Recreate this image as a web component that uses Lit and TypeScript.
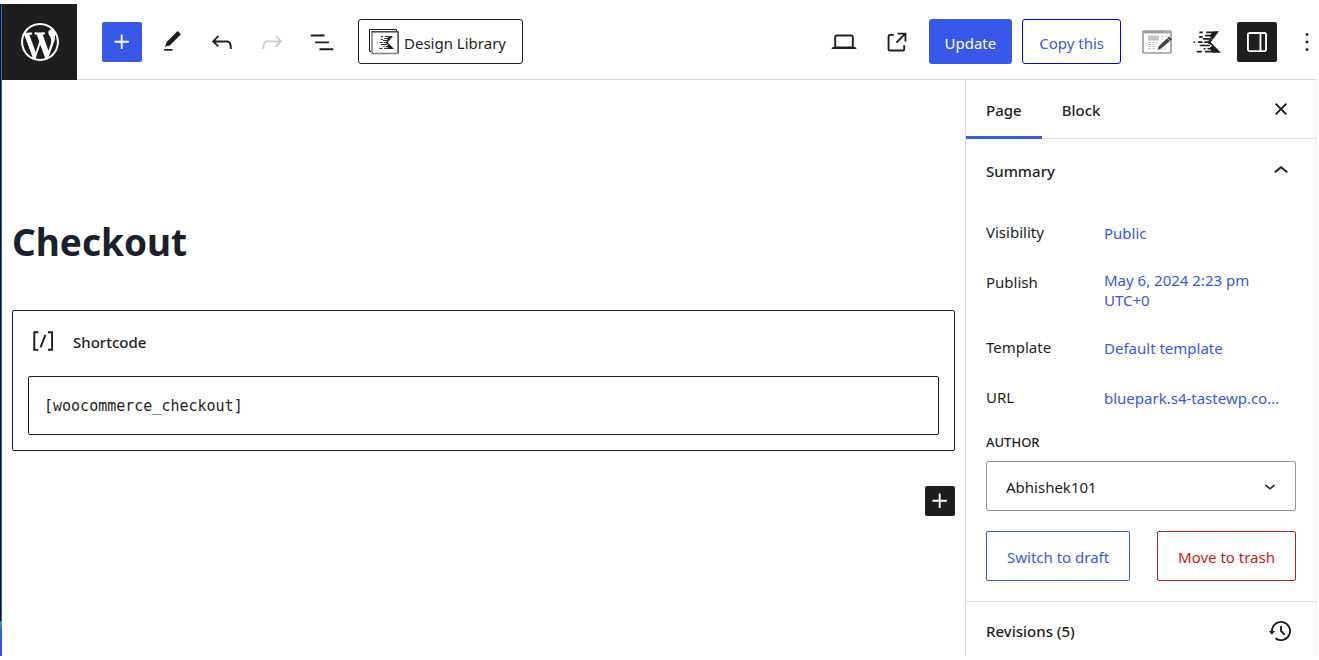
import { LitElement, html, css, svg } from "lit";
import { customElement, state } from "lit/decorators.js";

const PATHS = {
  plus: "M11 12.5V17.5H12.5V12.5H17.5V11H12.5V6H11V11H6V12.5H11Z",
  edit: "M20.1 5.1L16.9 2 6.2 12.7l-1.3 4.4 4.5-1.3L20.1 5.1zM4 20.8h8v-1.5H4v1.5z",
  undo: "M18.3 11.7c-.6-.6-1.4-.9-2.3-.9H6.7l2.9-3.3-1.1-1-4.5 5L8.5 16l1-1-2.7-2.7H16c.5 0 .9.2 1.3.5 1 1 1 3.4 1 4.5v.3h1.5v-.2c0-1.5 0-4.3-1.5-5.7z",
  redo: "M15.6 6.5l-1.1 1 2.9 3.3H8c-.9 0-1.7.3-2.3.9-1.4 1.5-1.4 4.2-1.4 5.6v.2h1.5v-.3c0-1.1 0-3.5 1-4.5.3-.3.7-.5 1.3-.5h9.2L14.5 15l1.1 1.1 4.6-4.6-4.6-5z",
  list: "M3 6h11v1.5H3V6Zm3.5 5.5h11V13h-11v-1.5ZM21 17H10v1.5h11V17Z",
  laptop: "M20.5 16h-.7V8c0-1.1-.9-2-2-2H6.2c-1.1 0-2 .9-2 2v8h-.7c-.8 0-1.5.7-1.5 1.5h20c0-.8-.7-1.5-1.5-1.5zM5.7 8c0-.3.2-.5.5-.5h11.6c.3 0 .5.2.5.5v7.6H5.7V8z",
  external: "M19.5 4.5h-7V6h4.44l-5.97 5.97 1.06 1.06L18 7.06v4.44h1.5v-7Zm-13 1a2 2 0 0 0-2 2v10a2 2 0 0 0 2 2h10a2 2 0 0 0 2-2v-3H17v3a.5.5 0 0 1-.5.5h-10a.5.5 0 0 1-.5-.5v-10a.5.5 0 0 1 .5-.5h3V5.5h-3Z",
  drawer: "M18 4H6c-1.1 0-2 .9-2 2v12c0 1.1.9 2 2 2h12c1.1 0 2-.9 2-2V6c0-1.1-.9-2-2-2zm-4 14.5H6c-.3 0-.5-.2-.5-.5V6c0-.3.2-.5.5-.5h8v13zm4.5-.5c0 .3-.2.5-.5.5h-2.5v-13H18c.3 0 .5.2.5.5v12z",
  more: "M13 19h-2v-2h2v2zm0-6h-2v-2h2v2zm0-6h-2V5h2v2z",
  close: "M12 13.06l3.712 3.713 1.061-1.06L13.061 12l3.712-3.712-1.06-1.06L12 10.938 8.288 7.227l-1.061 1.06L10.939 12l-3.712 3.712 1.06 1.061L12 13.061z",
  up: "M6.5 12.4L12 8l5.5 4.4-.9 1.2L12 10l-4.5 3.6-1-1.2z",
  down: "M17.5 11.6L12 16l-5.5-4.4.9-1.2L12 14l4.5-3.6 1 1.2z",
  shortcode: "M16 4.2v1.5h2.5v12.5H16v1.5h4V4.2h-4zM4.2 19.8h4v-1.5H5.8V5.8h2.5V4.2h-4l-.1 15.6zm5.1-3.1l1.4.6 4-10-1.4-.6-4 10z",
  history: "M5.5 12h1.75l-2.5 3-2.5-3H4a8 8 0 113.134 6.35l.907-1.194A6.5 6.5 0 105.5 12zm9.53 1.97l-2.28-2.28V8.5a.75.75 0 00-1.5 0V12a.747.747 0 00.218.529l1.282-.84-1.28.842 2.5 2.5a.75.75 0 101.06-1.061z",
};

const icon = (name: keyof typeof PATHS, size = 30) => html`
  <svg width=${size} height=${size} viewBox="0 0 24 24" fill="currentColor" aria-hidden="true">
    <path d=${PATHS[name]}></path>
  </svg>`;

const wordpressLogo = html`
  <svg width="38" height="38" viewBox="0 0 20 20" fill="currentColor" aria-hidden="true">
    <path d="M20 10c0-5.51-4.49-10-10-10C4.48 0 0 4.49 0 10c0 5.52 4.48 10 10 10 5.51 0 10-4.48 10-10zM7.78 15.37L4.37 6.22c.55-.02 1.17-.08 1.17-.08.5-.06.44-1.13-.06-1.11 0 0-1.45.11-2.37.11-.18 0-.37 0-.58-.01C4.12 2.69 6.87 1.11 10 1.11c2.33 0 4.45.87 6.05 2.34-.68-.11-1.65.39-1.65 1.58 0 .74.45 1.36.9 2.1.35.61.55 1.36.55 2.46 0 1.49-1.4 5-1.4 5l-3.03-8.37c.54-.02.82-.17.82-.17.5-.05.44-1.25-.06-1.22 0 0-1.44.12-2.38.12-.87 0-2.33-.12-2.33-.12-.5-.03-.56 1.2-.06 1.22l.92.08 1.26 3.41zM17.41 10c.24-.64.74-1.87.43-4.25.7 1.29 1.05 2.71 1.05 4.25 0 3.29-1.73 6.24-4.4 7.78.97-2.59 1.94-5.2 2.92-7.78zM6.1 18.09C3.12 16.65 1.11 13.53 1.11 10c0-1.3.23-2.48.72-3.59C3.25 10.3 4.67 14.2 6.1 18.09zm4.03-6.63l2.58 6.98c-.86.29-1.76.45-2.71.45-.79 0-1.57-.11-2.29-.33.81-2.38 1.62-4.74 2.42-7.1z"></path>
  </svg>`;

/* Winged K mark with speed lines, drawn on an 85 x 67 grid. */
const kadenceShape = svg`
  <path d="M62 1H79L54 34L85 66H62L52 56V50L58 44L46 38V30L58 24L52 18V12Z" fill="currentColor"></path>
  <g stroke="currentColor" stroke-width="5" stroke-linecap="round">
    <path d="M21 4H28M42 4H60M38 14H54M20 18H28M32 24H54M3 34H3.1M17 34H27M36 34H50M22 44H50M34 54H36M46 54H56M13 63H25M38 63H64"></path>
  </g>`;

const kadenceIcon = html`
  <svg width="28" height="22" viewBox="0 0 85 67" aria-hidden="true">${kadenceShape}</svg>`;

const libraryIcon = html`
  <svg width="30" height="26" viewBox="0 0 30 26" fill="none" aria-hidden="true">
    <path d="M2 22.5H.5V.5H27.5V2" stroke="#1e1e1e"></path>
    <rect x="3" y="3" width="26" height="21.5" fill="#fff" stroke="#888" stroke-width="1.6"></rect>
    <path d="M2.5 2.6H29.2V24" stroke="#444"></path>
    <svg x="8" y="6.5" width="17" height="14" viewBox="0 0 85 67">${kadenceShape}</svg>
  </svg>`;

const pageEditIcon = html`
  <svg width="30" height="24" viewBox="0 0 30 24" fill="none" aria-hidden="true">
    <rect x="1" y="1" width="28" height="22" rx="1" fill="#fff" stroke="#999" stroke-width="1.6"></rect>
    <path d="M1 2.2H29" stroke="#999" stroke-width="2.4"></path>
    <path d="M22 2H24M25.5 2H27.5" stroke="#ddd"></path>
    <rect x="6" y="5.5" width="11" height="5" fill="#c4c4c4"></rect>
    <path d="M19 6.5H25M19 9H23M6 12.5H16M6 14.5H15M6 16.5H14M6 18.5H13" stroke="#ccc" stroke-dasharray="3 1"></path>
    <path d="M18 17.5H25V20H14Z" fill="#ececec"></path>
    <path d="M27 6.5L30 9.5 19 18.5 15.5 20 16.8 16.2Z" fill="#444"></path>
    <path d="M25 8.2L28 11.2" stroke="#ccc" stroke-width=".8"></path>
  </svg>`;

@customElement("app-root")
export class AppRoot extends LitElement {
  @state() private tab = "Page";
  @state() private open = true;

  private details = [
    { label: "Visibility", value: "Public" },
    { label: "Publish", value: "May 6, 2024 2:23 pm UTC+0" },
    { label: "Template", value: "Default template" },
    { label: "URL", value: "bluepark.s4-tastewp.co…" },
  ];

  static styles = css`
    :host {
      display: block;
      box-sizing: border-box;
      min-height: 100vh;
      padding: 4px 2px 4px 0;
      background: #fff;
      color: #1e1e1e;
      font: 400 15px/20px "Noto Sans", "Open Sans", sans-serif;
      --accent: #3858e9;
      --line: #ddd;
    }
    *, *::before, *::after { box-sizing: border-box; }
    svg { display: block; flex: none; }
    button, select, textarea { font: inherit; color: inherit; margin: 0; }
    button { background: none; border: 0; padding: 0; cursor: pointer; white-space: nowrap; }
    h1, dl, dd { margin: 0; }
    .frame {
      display: grid;
      grid-template-columns: 2px minmax(0, 1fr);
      min-height: calc(100vh - 8px);
    }
    .edge {
      background:
        linear-gradient(90deg, transparent 50%, #0a78d0 50%) 0 0 / 100% 617px no-repeat,
        linear-gradient(#07070f 617px, #5a86b4 617px 621px, #1f6fc4 625px, #3b4df0 640px);
    }
    .app { display: grid; grid-template-rows: 76px 1fr; }
    .bar {
      display: flex;
      align-items: center;
      border-bottom: 1px solid var(--line);
      overflow-x: clip;
    }
    .logo {
      display: grid;
      place-items: center;
      width: 75px;
      height: 76px;
      margin-bottom: -1px;
      background: #1e1e1e;
      color: #fff;
      flex: none;
    }
    .tools { display: flex; align-items: center; gap: 10px; padding-left: 25px; flex: 1; }
    .actions { display: flex; align-items: center; gap: 10px; margin-right: -10px; }
    .tool {
      display: grid;
      place-items: center;
      width: 40px;
      height: 40px;
      border-radius: 2px;
      flex: none;
    }
    .primary { background: var(--accent); color: #fff; }
    .dark { background: #1e1e1e; color: #fff; }
    .tool:disabled { color: #ccc; cursor: default; }
    .btn {
      display: flex;
      align-items: center;
      justify-content: center;
      height: 45px;
      padding: 2px 15px 0;
      border: 1px solid transparent;
      border-radius: 3px;
    }
    .library { gap: 5px; margin-left: 6px; padding: 0 16px 0 10px; border-color: #1e1e1e; }
    .library span { padding-top: 2px; }
    .view { margin: 0 2px 0 3px; }
    .update { background: var(--accent); color: #fff; }
    .copy { border-color: #0000f0; color: var(--accent); margin-right: 6px; padding: 2px 16px 0; }
    .body { display: grid; grid-template-columns: minmax(0, 1fr) 352px; }
    .canvas { padding: 130px 10px 20px; }
    h1 { font-size: 37px; line-height: 64px; font-weight: 700; color: #1a202c; }
    .block {
      margin-top: 36px;
      padding: 15px;
      border: 1px solid #1e1e1e;
      border-radius: 2px;
    }
    .block-label {
      display: flex;
      align-items: center;
      gap: 15px;
      height: 30px;
      margin-bottom: 20px;
      font-weight: 500;
    }
    .block-label span { padding-top: 2px; }
    .code {
      display: block;
      width: 100%;
      height: 59px;
      padding: 19px 15px;
      border: 1px solid #1e1e1e;
      border-radius: 2px;
      background: #fff;
      resize: none;
      overflow: hidden;
      font-family: "DejaVu Sans Mono", monospace;
    }
    .append { display: flex; justify-content: flex-end; padding-top: 35px; }
    .append button { width: 30px; height: 30px; border-radius: 2px; }
    .side { border-left: 1px solid var(--line); border-right: 1px solid #eee; }
    .tabs { display: flex; height: 59px; border-bottom: 1px solid var(--line); }
    .tab { padding: 1px 20px 0; font-weight: 500; height: 59px; }
    .tab[aria-selected="true"] { border-bottom: 3px solid var(--accent); padding-top: 4px; }
    .close { margin: 9px 15px 0 auto; }
    .panel-head {
      display: flex;
      align-items: center;
      justify-content: space-between;
      width: 100%;
      height: 62px;
      padding: 1px 20px 0;
      font-weight: 500;
      text-align: left;
    }
    .details { display: grid; gap: 10px; padding: 12px 15px 0 20px; }
    .row { display: grid; grid-template-columns: 118px minmax(0, 1fr); }
    dt { padding-top: 9px; }
    dd { padding: 7px 20px 8px 0; display: grid; min-height: 40px; align-items: center; }
    dd button { color: var(--accent); text-align: left; white-space: normal; }
    .single { white-space: nowrap; }
    .fields { display: grid; gap: 9px; padding: 14px 20px 20px; }
    .fields label { font-size: 13px; font-weight: 500; text-transform: uppercase; }
    .select { display: grid; grid-template-columns: minmax(0, 1fr) 40px; align-items: center; }
    .select select {
      grid-area: 1 / 1 / 2 / 3;
      appearance: none;
      height: 50px;
      padding: 2px 19px 0;
      border: 1px solid #949494;
      border-radius: 2px;
      background: #fff;
    }
    .select svg { grid-area: 1 / 2; pointer-events: none; justify-self: start; margin-left: 3px; }
    .pair { display: flex; justify-content: space-between; padding-top: 11px; }
    .pair button {
      height: 50px;
      padding: 1px 20px 0;
      border: 1px solid currentColor;
      border-radius: 2px;
    }
    .draft { color: var(--accent); }
    .trash { color: #cc1818; }
    .revisions { border-top: 1px solid var(--line); height: 55px; padding-top: 4px; }
  `;

  render() {
    return html`
      <div class="frame">
        <div class="edge"></div>
        <div class="app">
          <header class="bar">
            <a class="logo" href="#" aria-label="View pages">${wordpressLogo}</a>
            <div class="tools">
              <button class="tool primary" aria-label="Add block">${icon("plus")}</button>
              <button class="tool" aria-label="Tools">${icon("edit", 25)}</button>
              <button class="tool" aria-label="Undo">${icon("undo")}</button>
              <button class="tool" aria-label="Redo" disabled>${icon("redo")}</button>
              <button class="tool" aria-label="Document overview">${icon("list")}</button>
              <button class="btn library">${libraryIcon}<span>Design Library</span></button>
            </div>
            <div class="actions">
              <button class="tool" aria-label="Preview">${icon("laptop")}</button>
              <button class="tool view" aria-label="View page">${icon("external")}</button>
              <button class="btn update">Update</button>
              <button class="btn copy">Copy this</button>
              <button class="tool" aria-label="Page notes">${pageEditIcon}</button>
              <button class="tool" aria-label="Kadence blocks">${kadenceIcon}</button>
              <button class="tool dark" aria-label="Settings">${icon("drawer")}</button>
              <button class="tool" aria-label="Options">${icon("more")}</button>
            </div>
          </header>
          <div class="body">
            <main class="canvas">
              <h1>Checkout</h1>
              <section class="block">
                <label class="block-label" for="code">${icon("shortcode")}<span>Shortcode</span></label>
                <textarea class="code" id="code" rows="1" .value=${"[woocommerce_checkout]"}></textarea>
              </section>
              <div class="append">
                <button class="tool dark" aria-label="Add block">${icon("plus")}</button>
              </div>
            </main>
            <aside class="side">
              <div class="tabs" role="tablist">
                ${["Page", "Block"].map((t) => html`
                  <button class="tab" role="tab" aria-selected=${this.tab === t ? "true" : "false"}
                    @click=${() => (this.tab = t)}>${t}</button>`)}
                <button class="tool close" aria-label="Close settings">${icon("close")}</button>
              </div>
              <button class="panel-head" aria-expanded=${this.open ? "true" : "false"}
                @click=${() => (this.open = !this.open)}>
                Summary ${icon("up")}
              </button>
              ${this.open ? html`
                <dl class="details">
                  ${this.details.map((d) => html`
                    <div class="row">
                      <dt>${d.label}</dt>
                      <dd><button class=${d.label === "Publish" ? "" : "single"}>${d.value}</button></dd>
                    </div>`)}
                </dl>
                <div class="fields">
                  <label for="author">Author</label>
                  <div class="select">
                    <select id="author"><option>Abhishek101</option></select>
                    ${icon("down", 22)}
                  </div>
                  <div class="pair">
                    <button class="draft">Switch to draft</button>
                    <button class="trash">Move to trash</button>
                  </div>
                </div>` : ""}
              <button class="panel-head revisions">Revisions (5) ${icon("history")}</button>
            </aside>
          </div>
        </div>
      </div>`;
  }
}
